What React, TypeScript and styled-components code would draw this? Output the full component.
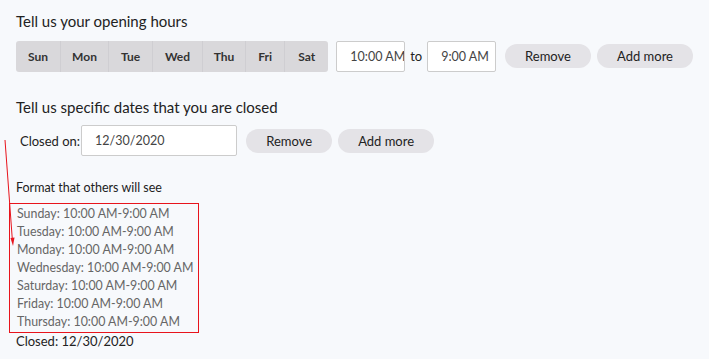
import React from 'react'
import styled, { createGlobalStyle } from 'styled-components'

const GlobalStyle = createGlobalStyle`
  html, body {
    margin: 0;
    padding: 0;
    background: #f7f9fc;
  }
  body {
    font-family: Lato, 'Noto Sans', 'Liberation Sans', sans-serif;
    color: #222;
  }
`

const days = [
  { label: 'Sun', width: 45 },
  { label: 'Mon', width: 48 },
  { label: 'Tue', width: 44 },
  { label: 'Wed', width: 50 },
  { label: 'Thu', width: 43 },
  { label: 'Fri', width: 39 },
  { label: 'Sat', width: 44 },
]

const schedule = [
  'Sunday',
  'Tuesday',
  'Monday',
  'Wednesday',
  'Saturday',
  'Friday',
  'Thursday',
]

const Page = styled.div`
  position: relative;
  padding: 11px 16px 0;
  height: 359px;
  box-sizing: border-box;
  overflow: hidden;
`

const Heading = styled.h2`
  margin: 0;
  font-size: 15px;
  font-weight: 400;
  line-height: 20px;
  color: #222;
`

const HoursRow = styled.div`
  display: flex;
  align-items: center;
  margin-top: 9px;
  height: 32px;
`

const DayBar = styled.div`
  display: flex;
  height: 31px;
  background: #d9d8db;
  border-radius: 3px;
  overflow: hidden;
`

const DayButton = styled.div<{ $w: number }>`
  display: flex;
  align-items: center;
  justify-content: center;
  width: ${(p) => p.$w}px;
  font-size: 12px;
  font-weight: 700;
  color: #333;
  & + & {
    border-left: 1px solid #cfced2;
  }
`

const TimeInput = styled.div<{ $w: number }>`
  display: flex;
  align-items: center;
  box-sizing: border-box;
  width: ${(p) => p.$w}px;
  height: 31px;
  padding-left: 13px;
  background: #fff;
  border: 1px solid #ccc;
  border-radius: 2px;
  font-size: 12.5px;
  color: #444;
  white-space: nowrap;
  overflow: hidden;
`

const ToLabel = styled.span`
  font-size: 13px;
  margin: 0 5px;
  color: #222;
`

const PillButton = styled.button<{ $w: number }>`
  width: ${(p) => p.$w}px;
  height: 24px;
  border: none;
  border-radius: 12px;
  background: #e4e3e7;
  font-family: inherit;
  font-size: 13px;
  color: #222;
  padding: 0;
`

const ButtonGroup = styled.div<{ $ml: number }>`
  display: flex;
  gap: 6px;
  margin-left: ${(p) => p.$ml}px;
`

const SecondHeading = styled(Heading)`
  margin-top: 25px;
`

const ClosedRow = styled.div`
  display: flex;
  align-items: center;
  margin-top: 8px;
  padding-left: 4px;
`

const ClosedLabel = styled.span`
  font-size: 13px;
  margin-right: 1px;
`

const FormatTitle = styled.div`
  margin-top: 24px;
  font-size: 12.5px;
  line-height: 16px;
  color: #222;
`

const ScheduleBox = styled.div`
  margin: 7px 0 0 -7px;
  width: 190px;
  box-sizing: border-box;
  border: 1px solid #e8141c;
  padding: 1px 0 1px 7px;
`

const ScheduleLine = styled.div`
  font-size: 12.4px;
  line-height: 18px;
  color: #666;
  white-space: nowrap;
`

const ClosedSummary = styled.div`
  font-size: 13px;
  line-height: 16px;
  margin-top: 0;
  color: #222;
`

const Arrow = styled.svg`
  position: absolute;
  left: 0;
  top: 130px;
  pointer-events: none;
`

export default function App() {
  return (
    <>
      <GlobalStyle />
      <Page>
        <Heading>Tell us your opening hours</Heading>
        <HoursRow>
          <DayBar>
            {days.map((d) => (
              <DayButton key={d.label} $w={d.width}>
                {d.label}
              </DayButton>
            ))}
          </DayBar>
          <TimeInput $w={70} style={{ marginLeft: 8 }}>
            10:00 AM
          </TimeInput>
          <ToLabel>to</ToLabel>
          <TimeInput $w={70}>9:00 AM</TimeInput>
          <ButtonGroup $ml={9}>
            <PillButton $w={86}>Remove</PillButton>
            <PillButton $w={96}>Add more</PillButton>
          </ButtonGroup>
        </HoursRow>

        <SecondHeading>Tell us specific dates that you are closed</SecondHeading>
        <ClosedRow>
          <ClosedLabel>Closed on:</ClosedLabel>
          <TimeInput $w={156}>12/30/2020</TimeInput>
          <ButtonGroup $ml={9}>
            <PillButton $w={86}>Remove</PillButton>
            <PillButton $w={96}>Add more</PillButton>
          </ButtonGroup>
        </ClosedRow>

        <FormatTitle>Format that others will see</FormatTitle>
        <ScheduleBox>
          {schedule.map((day) => (
            <ScheduleLine key={day}>{day}: 10:00 AM-9:00 AM</ScheduleLine>
          ))}
        </ScheduleBox>
        <ClosedSummary>Closed: 12/30/2020</ClosedSummary>

        <Arrow width="20" height="120" viewBox="0 0 20 120">
          <line x1="5" y1="10" x2="12.5" y2="112" stroke="#e8141c" strokeWidth="1" />
          <path d="M10.5 108 L13 116 L14.5 107.5 Z" fill="#e8141c" />
        </Arrow>
      </Page>
    </>
  )
}
